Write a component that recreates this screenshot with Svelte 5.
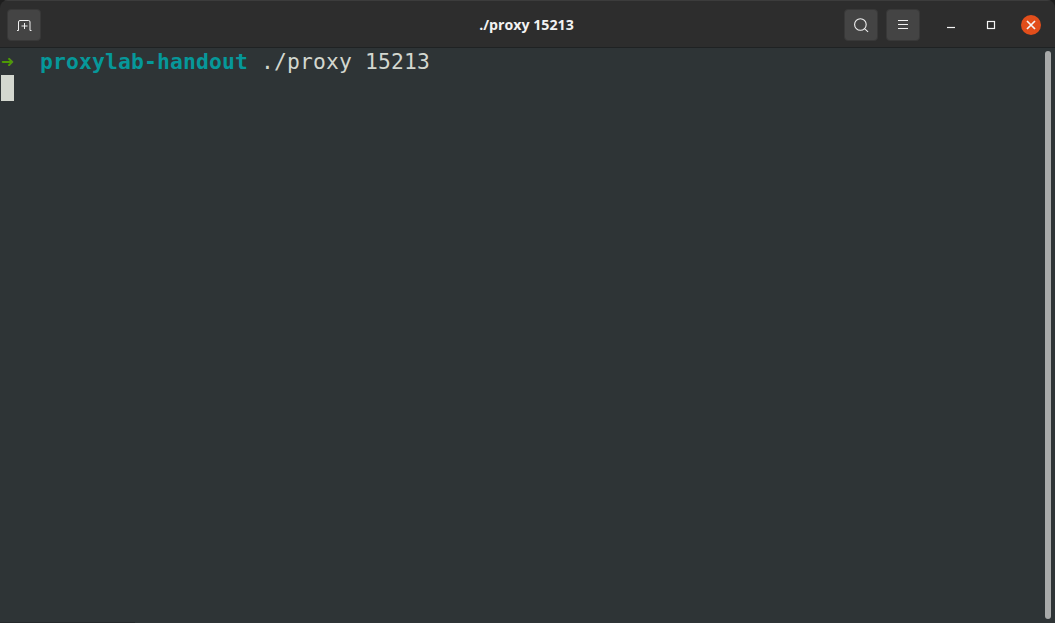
<script>
  const title = "./proxy 15213";
</script>

<div class="window">
  <header class="titlebar">
    <div class="side">
      <button class="hdr-btn" aria-label="New tab">
        <svg width="16" height="16" viewBox="0 0 16 16" fill="none" stroke="currentColor" stroke-width="1">
          <path d="M1 13.5h1.5V5a1.5 1.5 0 0 1 1.5-1.5h8.5a1.5 1.5 0 0 1 1.5 1.5v8.5h1.5" />
          <path d="M8.5 6v6M5.5 9h6" />
        </svg>
      </button>
    </div>
    <div class="title">{title}</div>
    <div class="side right">
      <button class="hdr-btn" aria-label="Search">
        <svg width="16" height="16" viewBox="0 0 16 16" fill="none" stroke="currentColor" stroke-width="1.1">
          <circle cx="7.4" cy="7.5" r="5.8" />
          <path d="M11.5 11.6l3.6 3.2" />
        </svg>
      </button>
      <button class="hdr-btn" aria-label="Menu">
        <svg width="16" height="16" viewBox="0 0 16 16" fill="none" stroke="currentColor" stroke-width="1">
          <path d="M3 3.5h10M3 7.5h10M3 11.5h10" />
        </svg>
      </button>
      <div class="wm">
        <button class="wm-btn" aria-label="Minimize">
          <svg width="16" height="16" viewBox="0 0 16 16" fill="none" stroke="currentColor" stroke-width="1.2"><path d="M4 10.5h8" /></svg>
        </button>
        <button class="wm-btn" aria-label="Maximize">
          <svg width="16" height="16" viewBox="0 0 16 16" fill="none" stroke="currentColor" stroke-width="1.2"><rect x="4.5" y="4.5" width="7" height="7" /></svg>
        </button>
        <button class="wm-btn close" aria-label="Close">
          <svg width="10" height="10" viewBox="0 0 10 10" fill="none" stroke="currentColor" stroke-width="1.7"><path d="M1 1l8 8M9 1l-8 8" /></svg>
        </button>
      </div>
    </div>
  </header>

  <main class="terminal">
    <div class="row"><span class="arrow">➜</span>{"  "}<b class="dir">proxylab-handout</b> ./proxy 15213</div>
    <div class="row"><span class="cursor"></span></div>
    <div class="scrollbar"></div>
    <div class="edge"></div>
  </main>
</div>

<style>
  :global(body) {
    margin: 0;
    background: #1e1e1e;
    overflow: hidden;
  }
  .window {
    display: flex;
    flex-direction: column;
    height: 623px;
    border-radius: 8px 8px 0 0;
    overflow: hidden;
  }
  .titlebar {
    display: flex;
    align-items: center;
    justify-content: space-between;
    position: relative;
    height: 48px;
    box-sizing: border-box;
    padding: 1px 14px 0 7px;
    background: #2d2d2d;
    border-top: 1px solid #3c3c3c;
    border-bottom: 1px solid #1f2223;
    flex-shrink: 0;
  }
  .side {
    display: flex;
    align-items: center;
    gap: 8px;
  }
  .title {
    position: absolute;
    left: 0;
    right: 2px;
    text-align: center;
    color: #f2f2f2;
    font-family: "Open Sans", "Noto Sans", sans-serif;
    font-weight: 700;
    font-size: 14.2px;
    pointer-events: none;
  }
  .hdr-btn {
    display: flex;
    align-items: center;
    justify-content: center;
    width: 34px;
    height: 32px;
    padding: 0;
    background: #444444;
    border: 1px solid #383838;
    border-radius: 4px;
    color: #f0f0f0;
  }
  .wm {
    display: flex;
    align-items: center;
    gap: 20px;
    margin-left: 13px;
  }
  .wm-btn {
    display: flex;
    align-items: center;
    justify-content: center;
    width: 20px;
    height: 20px;
    padding: 0;
    background: none;
    border: none;
    border-radius: 50%;
    color: #f5f5f5;
  }
  .wm-btn.close {
    background: #e24e1b;
  }
  .terminal {
    position: relative;
    flex: 1;
    padding: 1px 0 0 1px;
    background: #2e3436;
    color: #d3d7cf;
    font-family: "DejaVu Sans Mono", monospace;
    font-size: 21.33px;
    letter-spacing: 0.16px;
  }
  .row {
    height: 26px;
    line-height: 26px;
    white-space: pre;
  }
  .arrow {
    color: #4e9a06;
    font-weight: 700;
  }
  .dir {
    color: #06989a;
    font-weight: 700;
  }
  .cursor {
    display: block;
    width: 13px;
    height: 26px;
    background: #d3d7cf;
  }
  .scrollbar {
    position: absolute;
    top: 3px;
    bottom: 4px;
    right: 4px;
    width: 6px;
    border-radius: 3px;
    background: #a8aaaa;
  }
  .edge {
    position: absolute;
    left: 0;
    bottom: 0;
    width: 135px;
    height: 1px;
    background: #25292b;
  }
</style>
